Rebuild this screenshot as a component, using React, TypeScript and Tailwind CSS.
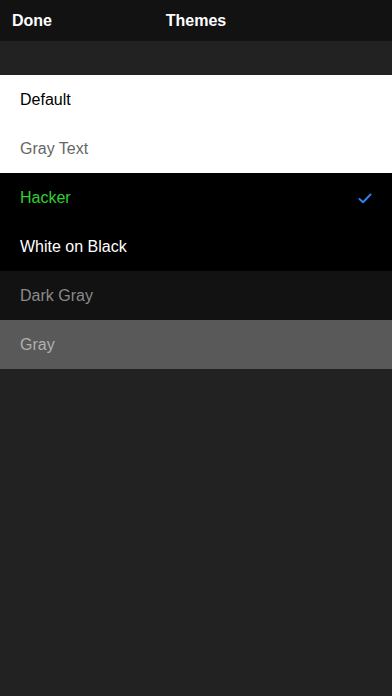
import React from 'react';

interface Theme {
  name: string;
  bg: string;
  fg: string;
  selected?: boolean;
}

const themes: Theme[] = [
  { name: 'Default', bg: 'bg-white', fg: 'text-black' },
  { name: 'Gray Text', bg: 'bg-white', fg: 'text-[#666666]' },
  { name: 'Hacker', bg: 'bg-black', fg: 'text-[#2fd02f]', selected: true },
  { name: 'White on Black', bg: 'bg-black', fg: 'text-white' },
  { name: 'Dark Gray', bg: 'bg-[#121212]', fg: 'text-[#8a8a8a]' },
  { name: 'Gray', bg: 'bg-[#595959]', fg: 'text-[#b0b0b0]' },
];

const App: React.FC = () => {
  return (
    <div className="w-[392px] h-[696px] bg-[#222222] flex flex-col font-['Liberation_Sans',Arial,sans-serif]">
      <div className="h-[41px] bg-[#121212] relative flex items-center justify-center shrink-0">
        <span className="absolute left-3 text-white text-[16px] font-bold">Done</span>
        <span className="text-white text-[16px] font-bold">Themes</span>
      </div>

      <div className="h-[34px] shrink-0" />

      <div className="flex flex-col">
        {themes.map((t) => (
          <div key={t.name} className={`h-[49px] flex items-center justify-between pl-5 pr-5 pt-[1px] ${t.bg}`}>
            <span className={`text-[16px] ${t.fg}`}>{t.name}</span>
            {t.selected && (
              <svg width="14" height="11" viewBox="0 0 14 11" fill="none">
                <path d="M1.5 6 L5 9.2 L12.5 1.5" stroke="#2f80ed" strokeWidth="2" strokeLinecap="round" strokeLinejoin="round" />
              </svg>
            )}
          </div>
        ))}
      </div>
    </div>
  );
};

export default App;
